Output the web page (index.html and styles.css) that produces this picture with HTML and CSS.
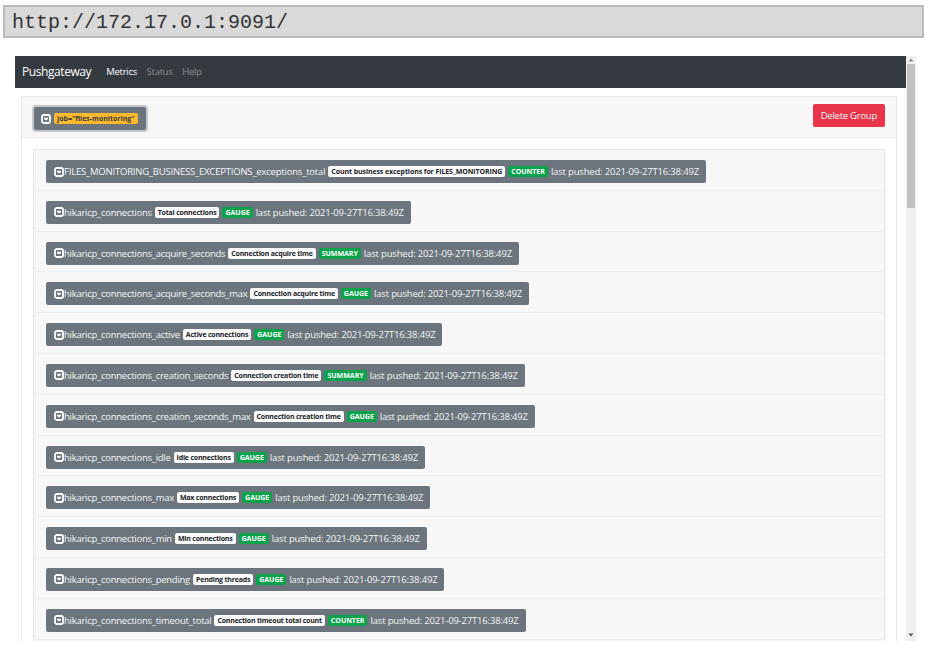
FILE: index.html
```html
<!DOCTYPE html>
<html lang="en">
<head>
    <meta charset="UTF-8">
    <meta name="viewport" content="width=device-width, initial-scale=1.0">
    <title>Prometheus Pushgateway</title>
    <link rel="stylesheet" href="styles.css">
</head>
<body>
    <svg class="symbols" width="0" height="0">
        <symbol id="toggle" viewBox="0 0 10 10">
            <rect x="1" y="1" width="8" height="8" rx="1.8" fill="none" stroke="#fff" stroke-width="1.8"/>
            <path d="M3 3.8h4v1.2L5 6.6 3 5z" fill="#fff"/>
        </symbol>
    </svg>

    <div class="address">http://172.17.0.1:9091/</div>

    <div class="window">
        <div class="page">
            <nav class="navbar">
                <a class="brand">Pushgateway</a>
                <a class="nav-link active">Metrics</a>
                <a class="nav-link">Status</a>
                <a class="nav-link">Help</a>
            </nav>

            <div class="card">
                <div class="card-header">
                    <button class="btn btn-job"><svg class="icon"><use href="#toggle"/></svg><span class="badge badge-warning">job="files-monitoring"</span></button>
                    <button class="btn btn-danger">Delete Group</button>
                </div>
                <div class="card-body">
                    <div class="metrics">
                        <div class="metric metric-caps"><button class="btn"><svg class="icon"><use href="#toggle"/></svg><span class="name">FILES_MONITORING_BUSINESS_EXCEPTIONS_exceptions_total</span><span class="badge badge-light">Count business exceptions for FILES_MONITORING</span><span class="badge badge-success">COUNTER</span><span class="pushed">last pushed: 2021-09-27T16:38:49Z</span></button></div>
                        <div class="metric"><button class="btn"><svg class="icon"><use href="#toggle"/></svg><span class="name">hikaricp_connections</span><span class="badge badge-light">Total connections</span><span class="badge badge-success">GAUGE</span><span class="pushed">last pushed: 2021-09-27T16:38:49Z</span></button></div>
                        <div class="metric"><button class="btn"><svg class="icon"><use href="#toggle"/></svg><span class="name">hikaricp_connections_acquire_seconds</span><span class="badge badge-light">Connection acquire time</span><span class="badge badge-success">SUMMARY</span><span class="pushed">last pushed: 2021-09-27T16:38:49Z</span></button></div>
                        <div class="metric"><button class="btn"><svg class="icon"><use href="#toggle"/></svg><span class="name">hikaricp_connections_acquire_seconds_max</span><span class="badge badge-light">Connection acquire time</span><span class="badge badge-success">GAUGE</span><span class="pushed">last pushed: 2021-09-27T16:38:49Z</span></button></div>
                        <div class="metric"><button class="btn"><svg class="icon"><use href="#toggle"/></svg><span class="name">hikaricp_connections_active</span><span class="badge badge-light">Active connections</span><span class="badge badge-success">GAUGE</span><span class="pushed">last pushed: 2021-09-27T16:38:49Z</span></button></div>
                        <div class="metric"><button class="btn"><svg class="icon"><use href="#toggle"/></svg><span class="name">hikaricp_connections_creation_seconds</span><span class="badge badge-light">Connection creation time</span><span class="badge badge-success">SUMMARY</span><span class="pushed">last pushed: 2021-09-27T16:38:49Z</span></button></div>
                        <div class="metric"><button class="btn"><svg class="icon"><use href="#toggle"/></svg><span class="name">hikaricp_connections_creation_seconds_max</span><span class="badge badge-light">Connection creation time</span><span class="badge badge-success">GAUGE</span><span class="pushed">last pushed: 2021-09-27T16:38:49Z</span></button></div>
                        <div class="metric"><button class="btn"><svg class="icon"><use href="#toggle"/></svg><span class="name">hikaricp_connections_idle</span><span class="badge badge-light">Idle connections</span><span class="badge badge-success">GAUGE</span><span class="pushed">last pushed: 2021-09-27T16:38:49Z</span></button></div>
                        <div class="metric"><button class="btn"><svg class="icon"><use href="#toggle"/></svg><span class="name">hikaricp_connections_max</span><span class="badge badge-light">Max connections</span><span class="badge badge-success">GAUGE</span><span class="pushed">last pushed: 2021-09-27T16:38:49Z</span></button></div>
                        <div class="metric"><button class="btn"><svg class="icon"><use href="#toggle"/></svg><span class="name">hikaricp_connections_min</span><span class="badge badge-light">Min connections</span><span class="badge badge-success">GAUGE</span><span class="pushed">last pushed: 2021-09-27T16:38:49Z</span></button></div>
                        <div class="metric"><button class="btn"><svg class="icon"><use href="#toggle"/></svg><span class="name">hikaricp_connections_pending</span><span class="badge badge-light">Pending threads</span><span class="badge badge-success">GAUGE</span><span class="pushed">last pushed: 2021-09-27T16:38:49Z</span></button></div>
                        <div class="metric"><button class="btn"><svg class="icon"><use href="#toggle"/></svg><span class="name">hikaricp_connections_timeout_total</span><span class="badge badge-light">Connection timeout total count</span><span class="badge badge-success">COUNTER</span><span class="pushed">last pushed: 2021-09-27T16:38:49Z</span></button></div>
                        <div class="metric"></div>
                    </div>
                </div>
            </div>
        </div>

        <div class="scrollbar">
            <svg class="arrow" viewBox="0 0 6 4"><path d="M3 0.5L5.5 3.5h-5z" fill="#8a8a8a"/></svg>
            <div class="thumb"></div>
            <svg class="arrow arrow-down" viewBox="0 0 6 4"><path d="M3 3.5L0.5 0.5h5z" fill="#505050"/></svg>
        </div>
    </div>
</body>
</html>
```
FILE: styles.css
```css
* {
    box-sizing: border-box;
}

body {
    margin: 0;
    padding: 5px 4px 0 3px;
    height: 654px;
    overflow: hidden;
    background-color: #fff;
    font-family: "Open Sans", "Noto Sans", sans-serif;
    font-size: 9.5px;
}

.symbols {
    display: none;
}

.address {
    height: 33px;
    padding-left: 7px;
    border: 2px solid #bbb;
    background-color: #d9d9d9;
    color: #333;
    font-family: "Liberation Mono", monospace;
    font-size: 20px;
    line-height: 31px;
}

.window {
    display: flex;
    width: 901px;
    height: 585px;
    margin: 18px 0 0 12px;
    overflow: hidden;
}

.page {
    flex: 1;
}

/* Navbar */
.navbar {
    display: flex;
    align-items: center;
    height: 32px;
    padding: 0 7px 1px;
    background-color: #343a40;
}

.brand {
    margin-right: 15px;
    color: #fff;
    font-size: 12px;
    letter-spacing: -0.42px;
}

.nav-link {
    margin-right: 9.5px;
    color: #8d9194;
    letter-spacing: -0.25px;
}

.nav-link.active {
    color: #fff;
}

/* Group card */
.card {
    margin: 8px 9px 0 6px;
    border: 1px solid #e6e6e6;
}

.card-header {
    display: flex;
    justify-content: space-between;
    align-items: flex-start;
    height: 41px;
    padding: 7px 11px 0 12px;
    border-bottom: 1px solid #e8e8e8;
    background-color: #f7f7f7;
}

.card-body {
    padding: 11px;
}

.metrics {
    border: 1px solid #e6e6e6;
    border-radius: 2px;
    background-color: #f7f7f7;
}

.metric {
    height: 40.8px;
    padding: 10px 12px;
    border-bottom: 1px solid #eee;
}

/* Buttons and badges */
.btn {
    display: flex;
    align-items: center;
    height: 23px;
    padding: 0 7px 0 8px;
    border: 0;
    border-radius: 2px;
    background-color: #6c757d;
    color: #f4f5f6;
    font-family: inherit;
    font-size: 9.5px;
    white-space: nowrap;
}

.btn-job {
    margin-top: 3px;
    padding: 0 8px 0 7px;
    box-shadow: 0 0 0 2px #c5c9cc;
}

.btn-danger {
    padding: 0 8px;
    background-color: #e8354a;
    letter-spacing: -0.25px;
}

.icon {
    flex: none;
    width: 10px;
    height: 10px;
}

.name {
    letter-spacing: -0.26px;
}

.pushed {
    letter-spacing: -0.18px;
}

.badge {
    padding: 0 3px;
    border-radius: 2px;
    font-size: 7px;
    font-weight: 700;
    line-height: 11px;
}

.badge-warning {
    margin-left: 3px;
    background-color: #fdb92d;
    color: #343a40;
}

.badge-light {
    margin: 0 3px;
    background-color: #fafafa;
    color: #212529;
    letter-spacing: -0.2px;
}

.badge-success {
    margin-right: 3px;
    background-color: #0aa34c;
    color: #fff;
}

/* Uppercase names need less tightening */
.metric-caps .name {
    letter-spacing: -0.2px;
}

.metric-caps .badge-light {
    letter-spacing: -0.09px;
}

/* Window scrollbar */
.scrollbar {
    display: flex;
    flex-direction: column;
    align-items: center;
    width: 10px;
    background-color: #f0f0f0;
}

.arrow {
    flex: none;
    width: 6px;
    height: 4px;
    margin: 2px 0;
}

.arrow-down {
    margin: auto 0 4px;
}

.thumb {
    width: 8px;
    height: 144px;
    background-color: #c1c1c1;
}
```
